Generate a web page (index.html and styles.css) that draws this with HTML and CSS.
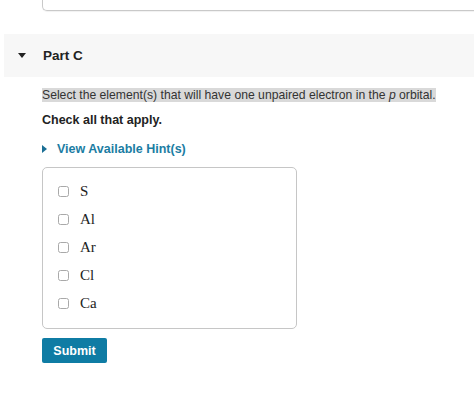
FILE: index.html
```html
<!DOCTYPE html>
<html>
<head>
<meta charset="utf-8">
<link rel="stylesheet" href="styles.css">
</head>
<body>
<div class="prev-box"></div>
<div class="part-head">
  <span class="caret-down"></span>
  <span class="part-title">Part C</span>
</div>
<div class="part-body">
  <p class="prompt"><span class="hl">Select the element(s) that will have one unpaired electron in the <i>p</i> orbital.</span></p>
  <p class="instr">Check all that apply.</p>
  <div class="hint"><span class="caret-right"></span><span class="hint-text">View Available Hint(s)</span></div>
  <div class="choices">
    <label class="choice"><span class="cb"></span><span class="lbl">S</span></label>
    <label class="choice"><span class="cb"></span><span class="lbl">Al</span></label>
    <label class="choice"><span class="cb"></span><span class="lbl">Ar</span></label>
    <label class="choice"><span class="cb"></span><span class="lbl">Cl</span></label>
    <label class="choice"><span class="cb"></span><span class="lbl">Ca</span></label>
  </div>
  <button class="submit">Submit</button>
</div>
</body>
</html>
```
FILE: styles.css
```css
html, body { margin: 0; padding: 0; background: #fff; }
body { font-family: "Liberation Sans", Arial, sans-serif; color: #222; width: 474px; overflow: hidden; }

.prev-box {
  margin-left: 42px;
  width: 432px;
  height: 10px;
  border: 1px solid #c9c9c9;
  border-top: none;
  border-right: none;
  border-bottom-left-radius: 5px;
  box-shadow: 0 1px 1px rgba(0,0,0,0.06);
}

.part-head {
  margin-top: 23px;
  margin-left: 4px;
  height: 43px;
  background: #f7f7f7;
  display: flex;
  align-items: center;
}
.caret-down {
  width: 0; height: 0;
  margin-left: 14px;
  border-left: 4.5px solid transparent;
  border-right: 4.5px solid transparent;
  border-top: 5px solid #222;
}
.part-title {
  margin-left: 17px;
  font-size: 13.5px;
  font-weight: bold;
  color: #222;
}

.part-body { padding-left: 42px; }
.prompt {
  margin: 11px 0 0 0;
  font-size: 12.2px;
  line-height: 15px;
  color: #333;
}
.hl { background: #d9d9d9; }
.instr {
  margin: 10px 0 0 0;
  font-size: 12.5px;
  line-height: 15px;
  font-weight: bold;
  color: #222;
}
.hint {
  margin-top: 13px;
  display: flex;
  align-items: center;
  height: 15px;
}
.caret-right {
  width: 0; height: 0;
  border-top: 4.5px solid transparent;
  border-bottom: 4.5px solid transparent;
  border-left: 5px solid #1b6f95;
}
.hint-text {
  margin-left: 10px;
  font-size: 12.5px;
  font-weight: bold;
  color: #1b7da3;
}

.choices {
  margin-top: 11px;
  width: 255px;
  height: 162px;
  border: 1px solid #c6c6c6;
  border-radius: 5px;
  padding-top: 9px;
  box-sizing: border-box;
}
.choice {
  display: flex;
  align-items: center;
  height: 28px;
  padding-left: 15px;
}
.cb {
  width: 9px; height: 9px;
  border: 1px solid #a9a9a9;
  border-radius: 2.5px;
  background: #fff;
}
.lbl {
  margin-left: 11px;
  font-family: "Liberation Serif", "Times New Roman", serif;
  font-size: 15px;
  color: #222;
}

.submit {
  margin-top: 9px;
  width: 65px;
  height: 25px;
  border: none;
  border-radius: 2px;
  background: #0f7ca4;
  color: #fff;
  font-family: "Liberation Sans", Arial, sans-serif;
  font-size: 12.5px;
  font-weight: bold;
  padding: 0;
}
```
